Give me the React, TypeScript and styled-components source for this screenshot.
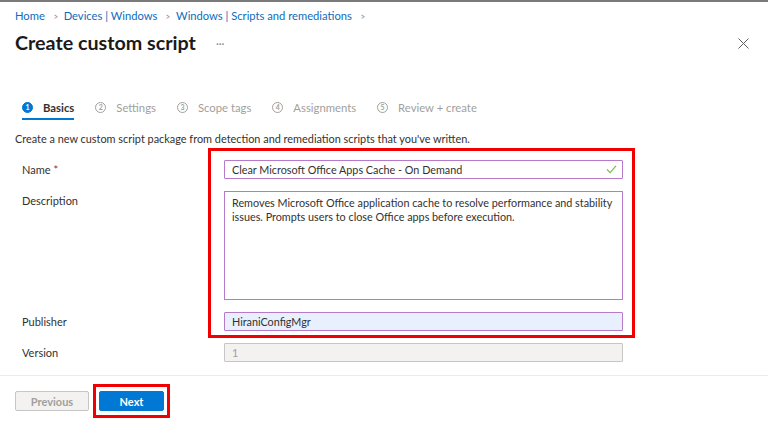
import { FC } from "react";
import styled, { createGlobalStyle } from "styled-components";

const GlobalStyle = createGlobalStyle`
	html, body {
		margin: 0;
		padding: 0;
		background: #fff;
		font-family: Lato, "Open Sans", sans-serif;
		color: #323130;
	}
`;

const crumbs = ["Home", "Devices | Windows", "Windows | Scripts and remediations"];
const steps = ["Basics", "Settings", "Scope tags", "Assignments", "Review + create"];

const App: FC = () => {
	return (
		<>
			<GlobalStyle />
			<Page>
				<Header>
					<Crumbs>
						{crumbs.map((c) => (
							<Crumb key={c}>
								<CrumbLink>{c}</CrumbLink>
								<Chevron>{">"}</Chevron>
							</Crumb>
						))}
					</Crumbs>
					<TitleRow>
						<Title>Create custom script</Title>
						<More>···</More>
						<Spacer />
						<CloseBtn type="button" aria-label="Close">
							<svg width="11" height="11" viewBox="0 0 11 11">
								<path d="M0.5 0.5 L10.5 10.5 M10.5 0.5 L0.5 10.5" stroke="#605e5c" strokeWidth="1" />
							</svg>
						</CloseBtn>
					</TitleRow>
				</Header>

				<Body>
					<Steps>
						{steps.map((s, i) => (
							<Step key={s} $active={i === 0}>
								<StepNum $active={i === 0}>{i + 1}</StepNum>
								{s}
							</Step>
						))}
					</Steps>

					<Intro>Create a new custom script package from detection and remediation scripts that you've written.</Intro>

					<Form>
						<Highlight />
						<Label $row={1}>
							Name <Req>*</Req>
						</Label>
						<InputBox $row={1} $tone="edit">
							Clear Microsoft Office Apps Cache - On Demand
							<Check viewBox="0 0 12 10" width="11" height="9">
								<path d="M1 5 L4.5 8.5 L11 1" stroke="#7fba4a" strokeWidth="1.3" fill="none" />
							</Check>
						</InputBox>

						<Label $row={2}>Description</Label>
						<TextArea>
							Removes Microsoft Office application cache to resolve performance and stability issues. Prompts users to close Office apps before execution.
						</TextArea>

						<Label $row={3}>Publisher</Label>
						<InputBox $row={3} $tone="filled">
							HiraniConfigMgr
						</InputBox>

						<Label $row={4}>Version</Label>
						<InputBox $row={4} $tone="disabled">
							1
						</InputBox>
					</Form>
				</Body>

				<Footer>
					<Button type="button" disabled>
						Previous
					</Button>
					<NextWrap>
						<Button type="button" $primary>
							Next
						</Button>
					</NextWrap>
				</Footer>
			</Page>
		</>
	);
};

export default App;

const Page = styled.div`
	width: 768px;
	height: 426px;
	border-top: 2px solid #7a7a7a;
	box-sizing: border-box;
	display: flex;
	flex-direction: column;
	overflow: hidden;
`;

const Header = styled.div`
	padding: 7px 19px 0 15px;
`;

const Crumbs = styled.ul`
	list-style: none;
	margin: 0;
	padding: 0;
	display: flex;
	align-items: center;
	font-size: 11.2px;
	line-height: 14px;
`;

const Crumb = styled.li`
	display: flex;
	align-items: center;
`;

const CrumbLink = styled.span`
	color: #0f6cbd;
`;

const Chevron = styled.span`
	color: #8a8886;
	font-size: 10px;
	margin: 0 5px 0 8px;
	transform: scaleX(0.8);
`;

const TitleRow = styled.div`
	display: flex;
	align-items: center;
	margin-top: 6px;
	height: 28px;
`;

const Title = styled.h1`
	margin: 0;
	font-size: 19.7px;
	line-height: 28px;
	font-weight: 700;
	color: #1b1a19;
`;

const More = styled.span`
	margin-left: 20px;
	color: #8a8886;
	font-size: 11px;
`;

const Spacer = styled.div`
	flex: 1;
`;

const CloseBtn = styled.button`
	border: none;
	background: none;
	padding: 0;
	display: flex;
`;

const Body = styled.div`
	padding: 0 0 0 15px;
	flex: 1;
`;

const Steps = styled.div`
	display: flex;
	gap: 21px;
	margin-top: 40px;
	padding-left: 7px;
`;

const Step = styled.div<{ $active?: boolean }>`
	display: flex;
	align-items: center;
	gap: 10px;
	height: 20px;
	font-size: 11.3px;
	font-weight: ${(p) => (p.$active ? 700 : 400)};
	color: ${(p) => (p.$active ? "#323130" : "#a19f9d")};
	border-bottom: 2px solid ${(p) => (p.$active ? "#0078d4" : "transparent")};
	padding-bottom: 1px;
`;

const StepNum = styled.span<{ $active?: boolean }>`
	width: 11px;
	height: 11px;
	border-radius: 50%;
	box-sizing: border-box;
	display: flex;
	align-items: center;
	justify-content: center;
	font-size: 7px;
	font-weight: 700;
	color: ${(p) => (p.$active ? "#fff" : "#a19f9d")};
	background: ${(p) => (p.$active ? "#0078d4" : "transparent")};
	border: 1px solid ${(p) => (p.$active ? "#0078d4" : "#a19f9d")};
`;

const Intro = styled.p`
	margin: 12px 0 0;
	font-size: 10.9px;
	line-height: 14px;
	color: #323130;
`;

const Form = styled.div`
	display: grid;
	grid-template-columns: 202px 399px;
	grid-template-rows: 19px 109px 19px 19px;
	row-gap: 12px;
	margin-top: 14px;
	padding-left: 7px;
`;

const Highlight = styled.div`
	grid-column: 2;
	grid-row: 1 / 4;
	margin: -12px -12px -7px -16px;
	border: 3px solid #f00000;
	pointer-events: none;
`;

const Label = styled.div<{ $row: number }>`
	grid-column: 1;
	grid-row: ${(p) => p.$row};
	font-size: 11px;
	line-height: 19px;
	color: #323130;
`;

const Req = styled.span`
	color: #a4262c;
`;

const InputBox = styled.div<{ $row: number; $tone: "edit" | "filled" | "disabled" }>`
	grid-column: 2;
	grid-row: ${(p) => p.$row};
	height: 19px;
	box-sizing: border-box;
	display: flex;
	align-items: center;
	padding: 0 5px 0 7px;
	font-size: 10.8px;
	border: 1px solid ${(p) => (p.$tone === "disabled" ? "#c8c6c4" : "#b77acb")};
	background: ${(p) => (p.$tone === "filled" ? "#e8f0fe" : p.$tone === "disabled" ? "#f3f2f1" : "#fff")};
	color: ${(p) => (p.$tone === "disabled" ? "#a19f9d" : "#323130")};
	border-radius: 1px;
`;

const Check = styled.svg`
	margin-left: auto;
`;

const TextArea = styled.div`
	grid-column: 2;
	grid-row: 2;
	box-sizing: border-box;
	padding: 4px 7px;
	font-size: 10.8px;
	line-height: 14px;
	border: 1px solid #b77acb;
	color: #323130;
`;

const Footer = styled.div`
	border-top: 1px solid #edebe9;
	height: 51px;
	box-sizing: border-box;
	display: flex;
	align-items: center;
	gap: 4px;
	padding: 0 0 0 15px;
`;

const NextWrap = styled.div`
	border: 3px solid #f00000;
	padding: 4px 3px;
	display: flex;
`;

const Button = styled.button<{ $primary?: boolean }>`
	height: 20px;
	width: ${(p) => (p.$primary ? "65px" : "74px")};
	box-sizing: border-box;
	font-family: Lato, sans-serif;
	font-size: 11px;
	font-weight: 700;
	border-radius: 2px;
	border: 1px solid ${(p) => (p.$primary ? "#0078d4" : "#c8c6c4")};
	background: ${(p) => (p.$primary ? "#0078d4" : "#f3f2f1")};
	color: ${(p) => (p.$primary ? "#fff" : "#a19f9d")};
	padding: 0;
`;
